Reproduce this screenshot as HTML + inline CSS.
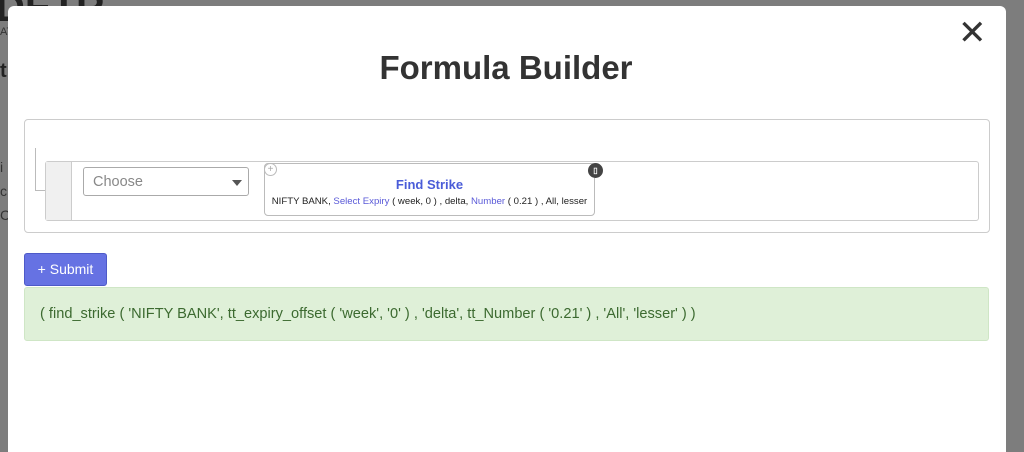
<html style="overflow:hidden"><head><style>
html,body{height:452px}
body{margin:0;width:1024px;height:452px;background:#7d7d7d;font-family:"Liberation Sans",sans-serif;position:relative;overflow:hidden}
.a{position:absolute}
</style></head><body>
<div class="a" style="left:-4px;top:-14px;font-size:40px;color:#222;font-weight:bold">DETR</div>
<div class="a" style="left:0;top:26px;font-size:11px;color:#333">AT</div>
<div class="a" style="left:0;top:60px;font-size:20px;font-weight:bold;color:#222">t</div>
<div class="a" style="left:0;top:155px;font-size:14px;color:#333;line-height:24px">i<br>c<br>C</div>
<div class="a" style="left:8px;top:6px;width:998px;height:460px;background:#fff;border-radius:6px"></div>
<div class="a" style="left:958px;top:16px;font-size:34px;color:#333;line-height:34px">✕</div>
<div class="a" style="left:0;width:1012px;top:49px;text-align:center;font-size:33px;font-weight:bold;color:#333">Formula Builder</div>
<div class="a" style="left:24px;top:119px;width:964px;height:112px;border:1px solid #ccc;border-radius:4px"></div>
<div class="a" style="left:35px;top:148px;width:10px;height:42px;border-left:1px solid #bbb;border-bottom:1px solid #bbb"></div>
<div class="a" style="left:45px;top:161px;width:932px;height:58px;border:1px solid #ccc;border-radius:3px"></div>
<div class="a" style="left:46px;top:162px;width:25px;height:58px;background:#f0f0f0;border-right:1px solid #ccc"></div>
<div class="a" style="left:83px;top:167px;height:29px;border:1px solid #aaa;border-radius:3px;color:#888;font-size:14.5px;line-height:29px;padding-left:9px;box-sizing:border-box;width:166px">Choose<span style="position:absolute;right:6px;top:12px;border:5px solid transparent;border-top:6px solid #555;border-bottom:0"></span></div>
<div class="a" style="left:264px;top:163px;width:329px;height:51px;border:1px solid #bbb;border-radius:4px;text-align:center">
<div style="color:#4a5cd8;font-weight:bold;font-size:13px;margin-top:13px">Find Strike</div>
<div style="font-size:9.6px;color:#222;margin-top:4px;white-space:nowrap">NIFTY BANK, <span style="color:#5a5ad8">Select Expiry</span> ( week, 0 ) , delta, <span style="color:#5a5ad8">Number</span> ( 0.21 ) , All, lesser</div></div>
<div class="a" style="left:264px;top:163px;width:13px;height:13px;border:1px solid #bbb;border-radius:50%;background:#fff;font-size:10px;line-height:12px;text-align:center;color:#aaa;box-sizing:border-box">+</div>
<div class="a" style="left:588px;top:163px;width:15px;height:15px;border-radius:50%;background:#444;color:#fff;font-size:8px;line-height:15px;text-align:center;font-weight:bold">▯</div>
<div class="a" style="left:24px;top:253px;width:83px;height:33px;background:#6672e3;border:1px solid #4e5ac8;border-radius:3px;box-sizing:border-box;color:#fff;font-size:14px;line-height:31px;text-align:center">+ Submit</div>
<div class="a" style="left:24px;top:287px;width:965px;height:54px;background:#dff0d8;border:1px solid #cfe6c6;border-radius:3px;box-sizing:border-box;color:#3c6a30;font-size:14.6px;line-height:52px;padding-left:15px;white-space:nowrap">( find_strike ( 'NIFTY BANK', tt_expiry_offset ( 'week', '0' ) , 'delta', tt_Number ( '0.21' ) , 'All', 'lesser' ) )</div>
</body></html>
